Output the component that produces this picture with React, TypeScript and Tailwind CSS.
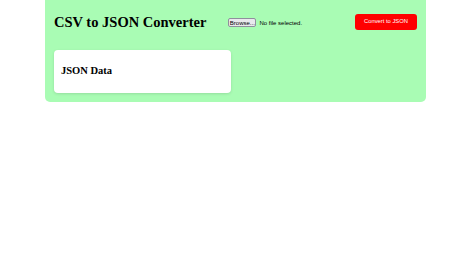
import React from "react";

export default function App() {
  return (
    <div className="w-[474px] h-[268px] bg-white" style={{ fontFamily: '"Liberation Sans", Arial, sans-serif' }}>
      <div className="ml-[45px] w-[381px] bg-[#a9fcb4] rounded-b-[5px] px-[9px] pt-[6px] pb-[9px]">
        <div className="flex items-center h-[32px]">
          <h1
            className="text-[14.5px] font-bold text-black leading-none"
            style={{ fontFamily: '"Liberation Serif", "Times New Roman", serif' }}
          >
            CSV to JSON Converter
          </h1>
          <div className="flex items-center ml-[22px] mt-[1px]">
            <div className="h-[9px] w-[28px] flex items-center justify-center bg-[#e9e9ed] border border-[#8f8f9d] rounded-[2px] text-[6px] leading-none text-black">
              Browse...
            </div>
            <span className="ml-[3px] text-[6px] leading-none text-black">No file selected.</span>
          </div>
          <div className="ml-auto w-[62px] h-[16px] bg-[#ff0000] rounded-[3px] flex items-center justify-center text-white text-[5.8px] leading-none">
            Convert to JSON
          </div>
        </div>
        <div className="grid grid-cols-2 gap-[9px] mt-[12px]">
          <div className="bg-white rounded-[4px] h-[43px] flex items-center px-[7px] shadow-[0_1px_3px_rgba(0,0,0,0.12)]">
            <h2
              className="text-[10.5px] font-bold text-black leading-none"
              style={{ fontFamily: '"Liberation Serif", "Times New Roman", serif' }}
            >
              JSON Data
            </h2>
          </div>
          <div></div>
        </div>
      </div>
    </div>
  );
}
